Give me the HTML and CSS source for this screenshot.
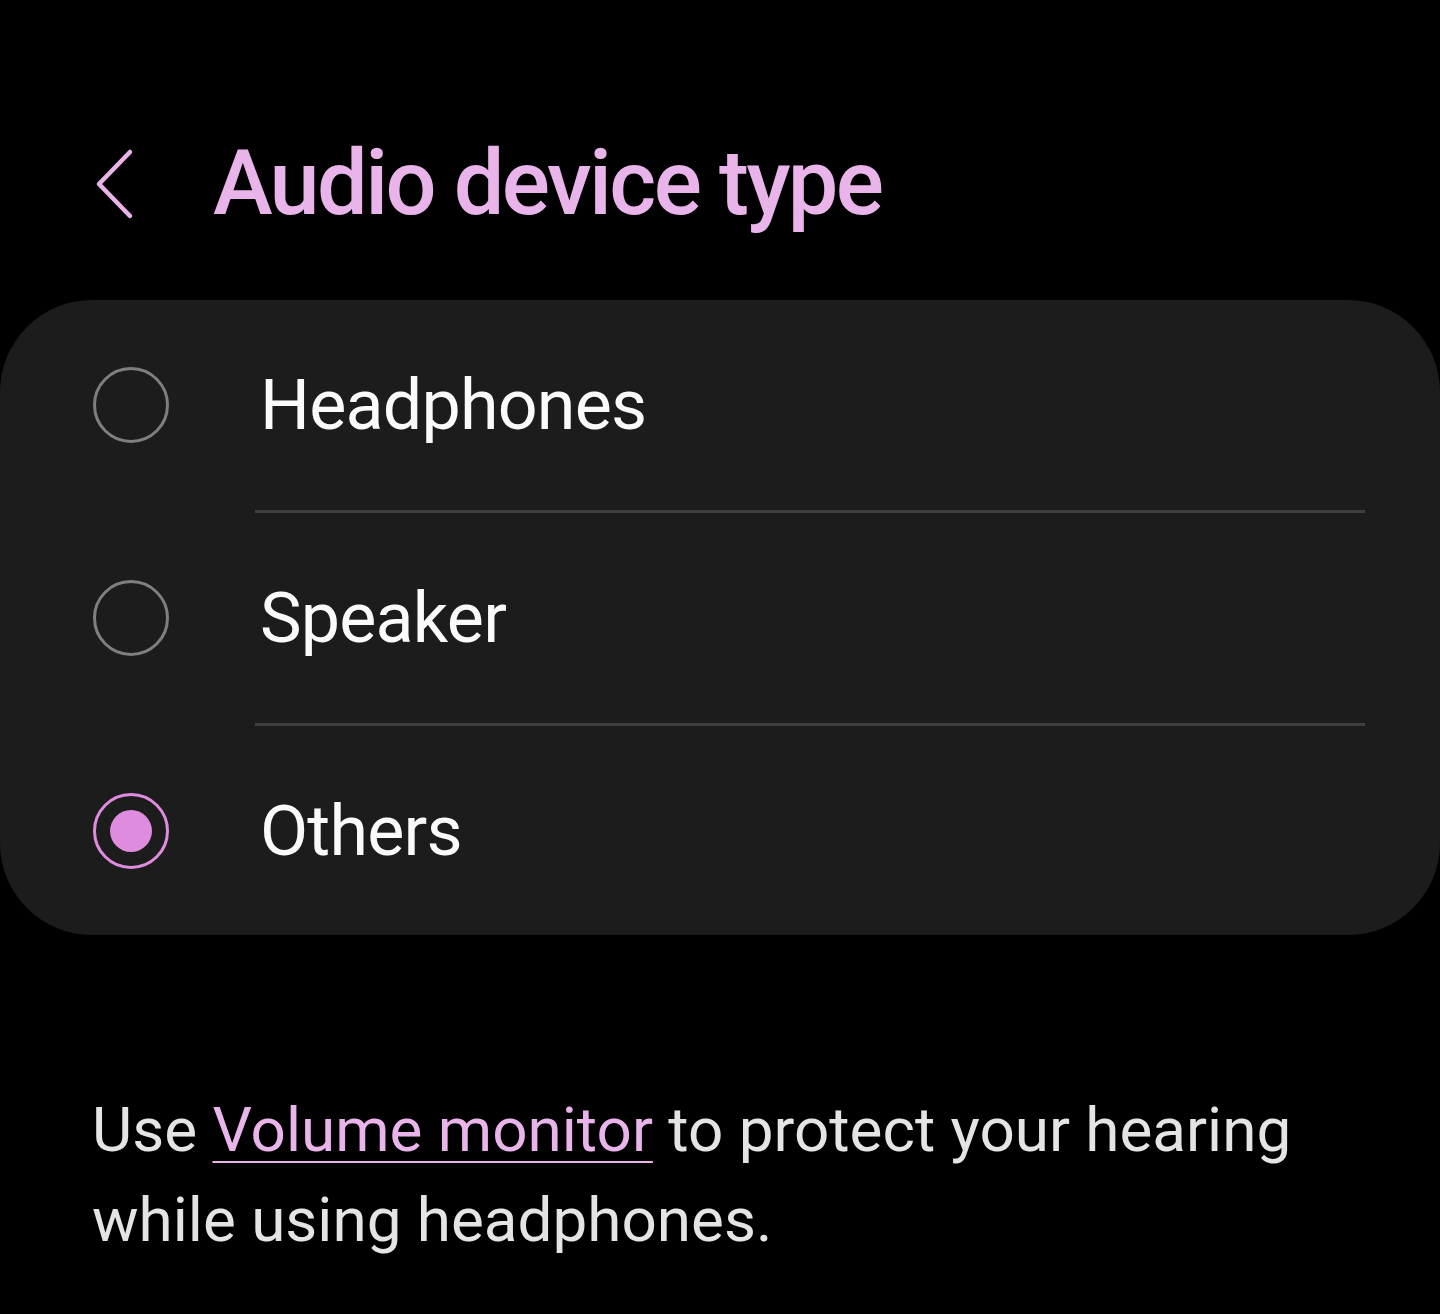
FILE: index.html
```html
<!DOCTYPE html>
<html lang="en">
<head>
  <meta charset="UTF-8" />
  <title>Audio device type</title>
  <link rel="stylesheet" href="styles.css">
</head>
<body>

  <header class="top-bar">
    <button class="back-btn" aria-label="Back">
      <svg width="44" height="72" viewBox="0 0 44 72">
        <path d="M37 4 L6 36 L37 68" fill="none" stroke="currentColor" stroke-width="4.5" stroke-linecap="round" stroke-linejoin="round" />
      </svg>
    </button>
    <h1 class="title">Audio device type</h1>
  </header>

  <div class="options-card">
    <label class="option">
      <input type="radio" name="device" value="headphones" />
      <span class="radio"></span>
      <span class="option-label">Headphones</span>
    </label>
    <div class="divider"></div>
    <label class="option">
      <input type="radio" name="device" value="speaker" />
      <span class="radio"></span>
      <span class="option-label">Speaker</span>
    </label>
    <div class="divider"></div>
    <label class="option">
      <input type="radio" name="device" value="others" checked />
      <span class="radio"></span>
      <span class="option-label">Others</span>
    </label>
  </div>

  <p class="hint">Use <a href="#">Volume monitor</a> to protect your hearing while using headphones.</p>

</body>
</html>
```

FILE: styles.css
```css
* {
  box-sizing: border-box;
}

html, body {
  margin: 0;
  padding: 0;
}

body {
  background: #000;
  font-family: Roboto, "Noto Sans", sans-serif;
  color: #fafafa;
  width: 1440px;
  min-height: 1314px;
}

/* Header */
.top-bar {
  display: flex;
  align-items: center;
  height: 300px;
  padding: 68px 0 0 93px;
}

.back-btn {
  background: none;
  border: none;
  padding: 0;
  color: #e9b4e9;
  display: flex;
  cursor: pointer;
  margin-right: 76px;
}

.title {
  margin: 0;
  font-size: 90px;
  font-weight: 500;
  letter-spacing: -2.6px;
  color: #e9b4e9;
  line-height: 1;
}

/* Options card */
.options-card {
  background: #1c1c1c;
  border-radius: 92px;
  display: flex;
  flex-direction: column;
}

.option {
  display: flex;
  align-items: center;
  height: 210px;
  padding-left: 93px;
  cursor: pointer;
}

.option:last-child {
  height: 209px;
}

.option input {
  display: none;
}

.radio {
  width: 76px;
  height: 76px;
  border: 3px solid #7f7f7f;
  border-radius: 50%;
  display: flex;
  align-items: center;
  justify-content: center;
  flex-shrink: 0;
}

.option input:checked + .radio {
  border-color: #df8cdf;
}

.option input:checked + .radio::after {
  content: "";
  width: 42px;
  height: 42px;
  border-radius: 50%;
  background: #df8cdf;
}

.option-label {
  margin-left: 91px;
  font-size: 70px;
  letter-spacing: -0.8px;
  color: #fafafa;
}

.divider {
  height: 3px;
  background: #3f3f3f;
  margin: 0 75px 0 255px;
}

/* Footer hint */
.hint {
  margin: 150px 100px 0 92px;
  font-size: 62px;
  line-height: 90px;
  color: #e4e4e4;
}

.hint a {
  color: #e9b4e9;
  text-decoration: underline;
  text-decoration-thickness: 2px;
  text-underline-offset: 10px;
}
```
